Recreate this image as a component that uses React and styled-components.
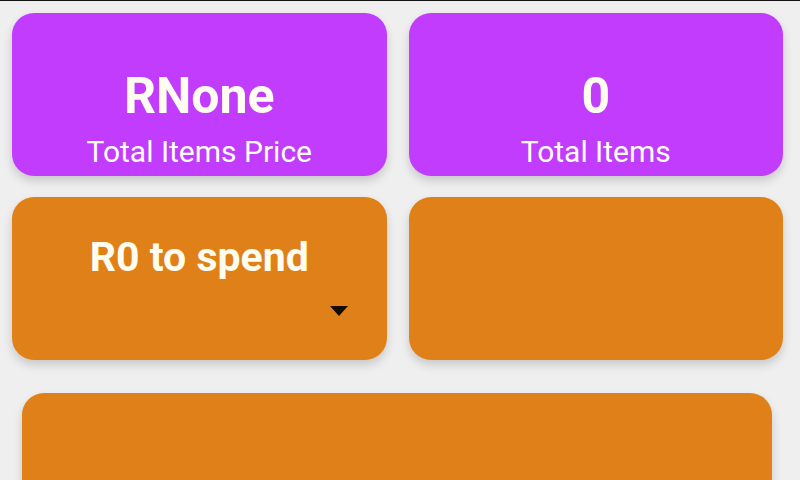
import styled, { createGlobalStyle } from 'styled-components';

const GlobalStyle = createGlobalStyle`
  html, body {
    margin: 0;
    padding: 0;
    background: #efefef;
    font-family: Roboto, "Liberation Sans", sans-serif;
  }
  body {
    border-top: 1px solid #111;
    overflow: hidden;
  }
`;

const Page = styled.div`
  width: 800px;
  height: 479px;
  box-sizing: border-box;
  padding: 12px 17px 0 12px;
  overflow: hidden;
`;

const Grid = styled.div`
  display: grid;
  grid-template-columns: 1fr 1fr;
  grid-auto-rows: 163px;
  column-gap: 22px;
  row-gap: 21px;
`;

const Card = styled.div`
  background: ${(p) => p.$bg};
  border-radius: 22px;
  box-shadow: 0 5px 10px rgba(0, 0, 0, 0.16);
  color: #fffdf0;
  display: flex;
  flex-direction: column;
  align-items: center;
`;

const StatCard = styled(Card)`
  justify-content: flex-end;
  padding-bottom: 6px;
  box-sizing: border-box;
`;

const Value = styled.div`
  font-size: 50px;
  font-weight: 700;
  line-height: 1.2;
`;

const Label = styled.div`
  font-size: 30px;
  font-weight: 400;
  line-height: 1.2;
  margin-top: 8px;
  color: #fffdf5;
`;

const SpendCard = styled(Card)`
  padding-top: 36px;
  box-sizing: border-box;
`;

const SpendText = styled.div`
  font-size: 41px;
  font-weight: 700;
  line-height: 1.2;
`;

const SelectRow = styled.div`
  align-self: stretch;
  display: flex;
  justify-content: flex-end;
  padding-right: 39px;
  margin-top: 24px;
`;

const Caret = styled.div`
  width: 0;
  height: 0;
  border-left: 9px solid transparent;
  border-right: 9px solid transparent;
  border-top: 10px solid #140c04;
`;

const BigCard = styled(Card)`
  margin: 33px 11px 0 10px;
  height: 220px;
`;

const PURPLE = '#c13cfd';
const ORANGE = '#e08018';

const App = () => {
  return (
    <>
      <GlobalStyle />
      <Page>
        <Grid>
          <StatCard $bg={PURPLE}>
            <Value>RNone</Value>
            <Label>Total Items Price</Label>
          </StatCard>
          <StatCard $bg={PURPLE}>
            <Value>0</Value>
            <Label>Total Items</Label>
          </StatCard>
          <SpendCard $bg={ORANGE}>
            <SpendText>R0 to spend</SpendText>
            <SelectRow>
              <Caret />
            </SelectRow>
          </SpendCard>
          <Card $bg={ORANGE} />
        </Grid>
        <BigCard $bg={ORANGE} />
      </Page>
    </>
  );
};

export default App;
